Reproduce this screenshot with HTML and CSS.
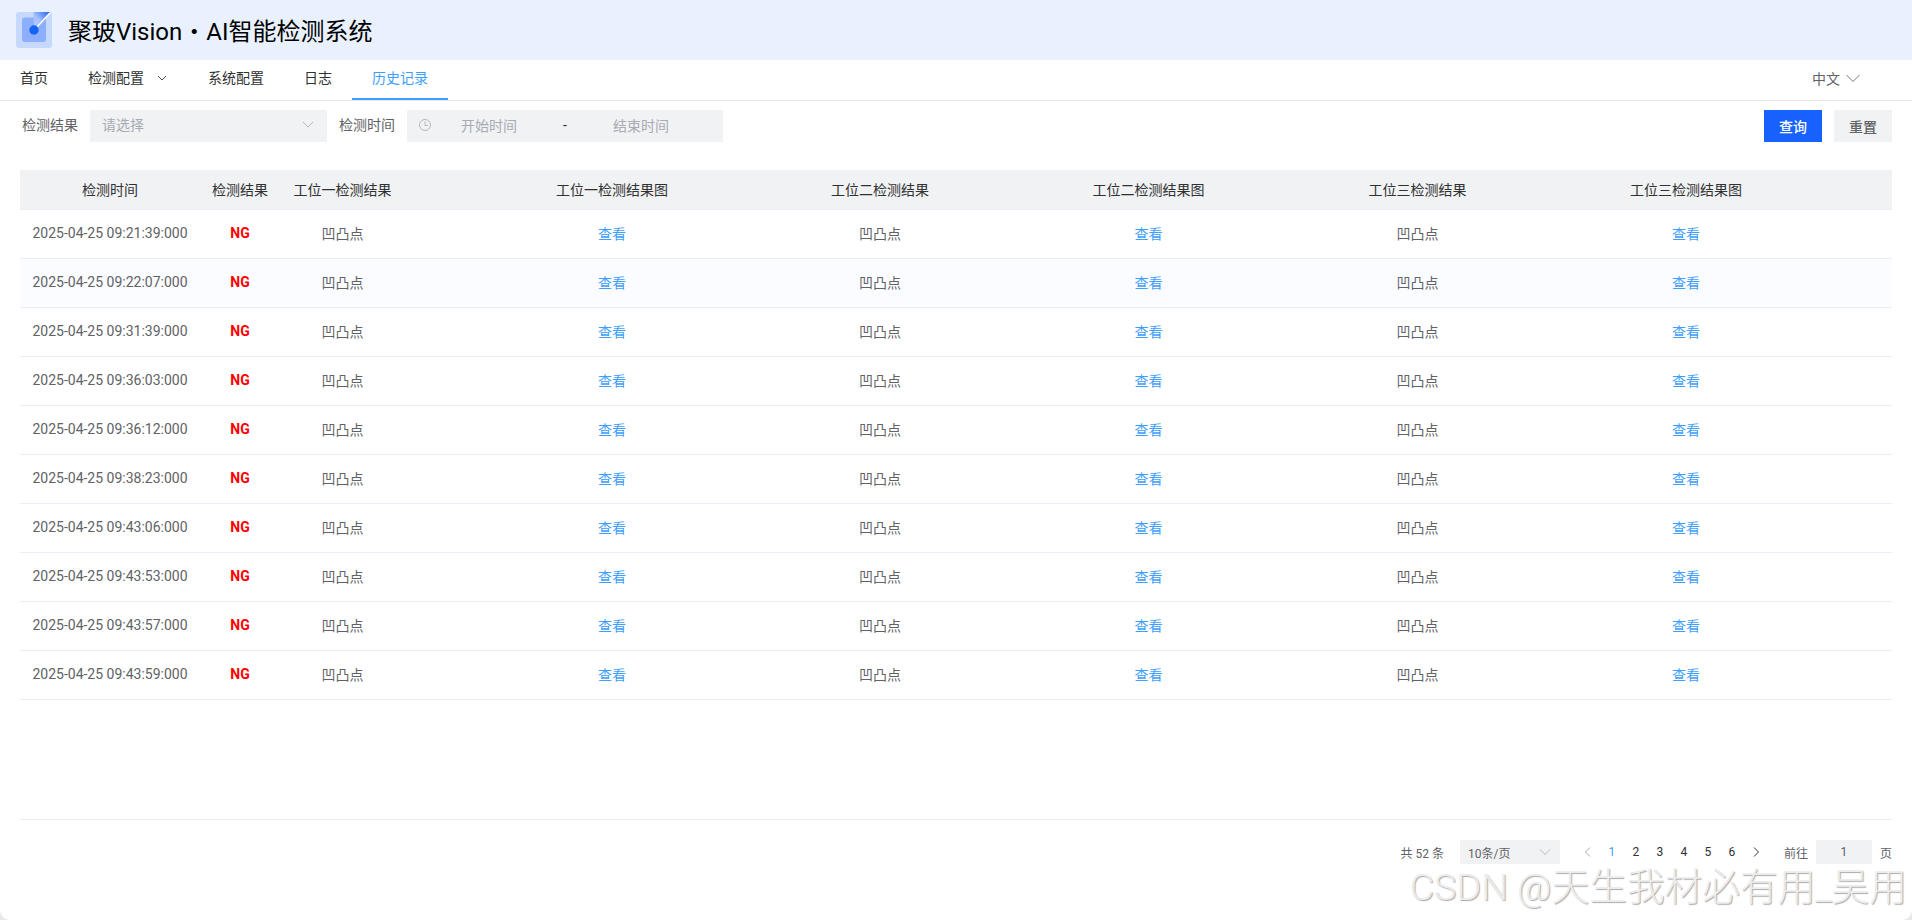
FILE: index.html
```html
<!DOCTYPE html>
<html lang="zh-CN">
<head>
<meta charset="utf-8">
<title>聚玻Vision・AI智能检测系统</title>
<link rel="stylesheet" href="styles.css">
</head>
<body>
<div class="app">
  <header class="topbar">
    <svg class="logo" width="36" height="36" viewBox="0 0 36 36">
      <defs>
        <linearGradient id="beam" x1="0" y1="1" x2="1" y2="0">
          <stop offset="0" stop-color="#b4ccfd"/>
          <stop offset="0.45" stop-color="#a4c0fd"/>
          <stop offset="1" stop-color="#1f62f5"/>
        </linearGradient>
      </defs>
      <rect x="0" y="0" width="36" height="36" rx="3" fill="#c6d9fd"/>
      <rect x="6" y="5.5" width="24" height="24.5" rx="3" fill="#8caffb"/>
      <path d="M17.5 0H34L18 17.5Z" fill="url(#beam)"/>
      <path d="M21 15L34 1" stroke="#fff" stroke-width="1.4"/>
      <circle cx="18" cy="18" r="4.7" fill="#1464f6"/>
    </svg>
    <h1 class="title">聚玻Vision・AI智能检测系统</h1>
  </header>

  <nav class="nav">
    <a class="nav-item">首页</a>
    <a class="nav-item">检测配置
      <svg class="chev" width="12" height="12" viewBox="0 0 12 12"><path d="M2 4l4 4 4-4" fill="none" stroke="#555" stroke-width="1"/></svg>
    </a>
    <a class="nav-item">系统配置</a>
    <a class="nav-item">日志</a>
    <a class="nav-item active">历史记录</a>
    <div class="lang">中文
      <svg width="14" height="14" viewBox="0 0 14 14"><path d="M0.5 4L7 10.5L13.5 4" fill="none" stroke="#777" stroke-width="1"/></svg>
    </div>
  </nav>

  <section class="filters">
    <label class="flabel">检测结果</label>
    <div class="select">
      <span class="ph">请选择</span>
      <svg width="14" height="14" viewBox="0 0 14 14"><path d="M2 5l5 5 5-5" fill="none" stroke="#b5b8bd" stroke-width="1"/></svg>
    </div>
    <label class="flabel time-label">检测时间</label>
    <div class="range">
      <svg class="clock" width="14" height="14" viewBox="0 0 14 14"><circle cx="7" cy="7" r="5.5" fill="none" stroke="#b5b8bd"/><path d="M7 3.5V7.5H10" fill="none" stroke="#b5b8bd"/></svg>
      <span class="ph range-text">开始时间</span>
      <span class="sep">-</span>
      <span class="ph range-text">结束时间</span>
    </div>
    <div class="actions">
      <button class="btn primary">查询</button>
      <button class="btn plain">重置</button>
    </div>
  </section>

  <main class="table-wrap">
    <table class="grid">
      <colgroup>
        <col class="c-time"><col class="c-res"><col class="c-a"><col class="c-b1"><col class="c-a2"><col class="c-b"><col class="c-a3"><col>
      </colgroup>
      <thead>
        <tr><th>检测时间</th><th>检测结果</th><th>工位一检测结果</th><th>工位一检测结果图</th><th>工位二检测结果</th><th>工位二检测结果图</th><th>工位三检测结果</th><th>工位三检测结果图</th></tr>
      </thead>
      <tbody>
        <tr><td>2025-04-25 09:21:39:000</td><td class="ng">NG</td><td>凹凸点</td><td class="link">查看</td><td>凹凸点</td><td class="link">查看</td><td>凹凸点</td><td class="link">查看</td></tr>
        <tr class="tint"><td>2025-04-25 09:22:07:000</td><td class="ng">NG</td><td>凹凸点</td><td class="link">查看</td><td>凹凸点</td><td class="link">查看</td><td>凹凸点</td><td class="link">查看</td></tr>
        <tr><td>2025-04-25 09:31:39:000</td><td class="ng">NG</td><td>凹凸点</td><td class="link">查看</td><td>凹凸点</td><td class="link">查看</td><td>凹凸点</td><td class="link">查看</td></tr>
        <tr><td>2025-04-25 09:36:03:000</td><td class="ng">NG</td><td>凹凸点</td><td class="link">查看</td><td>凹凸点</td><td class="link">查看</td><td>凹凸点</td><td class="link">查看</td></tr>
        <tr><td>2025-04-25 09:36:12:000</td><td class="ng">NG</td><td>凹凸点</td><td class="link">查看</td><td>凹凸点</td><td class="link">查看</td><td>凹凸点</td><td class="link">查看</td></tr>
        <tr><td>2025-04-25 09:38:23:000</td><td class="ng">NG</td><td>凹凸点</td><td class="link">查看</td><td>凹凸点</td><td class="link">查看</td><td>凹凸点</td><td class="link">查看</td></tr>
        <tr><td>2025-04-25 09:43:06:000</td><td class="ng">NG</td><td>凹凸点</td><td class="link">查看</td><td>凹凸点</td><td class="link">查看</td><td>凹凸点</td><td class="link">查看</td></tr>
        <tr><td>2025-04-25 09:43:53:000</td><td class="ng">NG</td><td>凹凸点</td><td class="link">查看</td><td>凹凸点</td><td class="link">查看</td><td>凹凸点</td><td class="link">查看</td></tr>
        <tr><td>2025-04-25 09:43:57:000</td><td class="ng">NG</td><td>凹凸点</td><td class="link">查看</td><td>凹凸点</td><td class="link">查看</td><td>凹凸点</td><td class="link">查看</td></tr>
        <tr><td>2025-04-25 09:43:59:000</td><td class="ng">NG</td><td>凹凸点</td><td class="link">查看</td><td>凹凸点</td><td class="link">查看</td><td>凹凸点</td><td class="link">查看</td></tr>
      </tbody>
    </table>
  </main>

  <footer class="pager">
    <span class="total">共 52 条</span>
    <div class="size">
      <span>10条/页</span>
      <svg width="12" height="12" viewBox="0 0 12 12"><path d="M1 3.5l5 5 5-5" fill="none" stroke="#b5b8bd" stroke-width="1"/></svg>
    </div>
    <div class="pages">
      <span class="page"><svg class="arrow" width="12" height="12" viewBox="0 0 12 12"><path d="M8 1.5L3.5 6 8 10.5" fill="none" stroke="#a8abb2" stroke-width="1"/></svg></span>
      <span class="page current">1</span><span class="page">2</span><span class="page">3</span><span class="page">4</span><span class="page">5</span><span class="page">6</span>
      <span class="page"><svg class="arrow" width="12" height="12" viewBox="0 0 12 12"><path d="M4 1.5L8.5 6 4 10.5" fill="none" stroke="#303133" stroke-width="1"/></svg></span>
    </div>
    <span class="goto">前往</span>
    <div class="jump">1</div>
    <span class="unit">页</span>
  </footer>

  <div class="watermark">CSDN @天生我材必有用_吴用</div>
</div>
</body>
</html>
```

FILE: styles.css
```css
* { box-sizing: border-box; }
html, body { margin: 0; height: 100%; background: #e8e8e8; }
body {
  font-family: Roboto, "Noto Sans CJK SC", "Liberation Sans", sans-serif;
  font-size: 14px;
  color: #606266;
  overflow: hidden;
}
.app {
  position: relative;
  height: 920px;
  display: flex;
  flex-direction: column;
  background: #fff;
  border-radius: 0 0 10px 10px;
  overflow: hidden;
}

.topbar {
  height: 60px;
  background: #e9f1fe;
  display: flex;
  align-items: center;
  padding-left: 16px;
  flex: none;
}
.logo { display: block; }
.title {
  margin: 0 0 2px 16px;
  font-size: 24px;
  font-weight: 400;
  color: #000;
  white-space: nowrap;
}

.nav {
  height: 41px;
  flex: none;
  display: flex;
  align-items: stretch;
  border-bottom: 1px solid #e4e7ed;
  background: #fff;
}
.nav-item {
  padding: 0 20px 5px;
  display: flex;
  align-items: center;
  color: #303133;
  border-bottom: 2px solid transparent;
  height: 40px;
  white-space: nowrap;
}
.chev { margin-left: 12px; margin-top: 2px; }
.nav-item.active { color: #409eff; border-bottom-color: #409eff; }
.lang {
  margin-left: auto;
  margin-right: 52px;
  padding-bottom: 5px;
  display: flex;
  align-items: center;
  gap: 6px;
  color: #606266;
}

.filters {
  height: 32px;
  margin-top: 9px;
  flex: none;
  display: flex;
  align-items: center;
  padding: 0 20px 0 22px;
}
.flabel { color: #606266; white-space: nowrap; padding-bottom: 5px; }
.select {
  width: 237px;
  height: 32px;
  margin-left: 12px;
  padding: 0 12px 4px;
  background: #f1f2f4;
  display: flex;
  align-items: center;
  justify-content: space-between;
}
.ph { color: #a8abb2; }
.time-label { margin-left: 12px; }
.range {
  width: 316px;
  height: 32px;
  margin-left: 12px;
  padding: 0 0 3px 11px;
  background: #f1f2f4;
  display: flex;
  align-items: center;
}
.clock { flex: none; }
.range-text { width: 56px; margin-left: 29px; white-space: nowrap; }
.sep { color: #303133; margin-left: 46px; width: 6px; }
.range-text:last-child { margin-left: 44px; }
.actions { margin-left: auto; display: flex; gap: 12px; }
.btn {
  width: 58px;
  height: 32px;
  border: 0;
  padding: 0 0 1px;
  font: inherit;
  font-weight: 500;
}
.primary { background: #1761ff; color: #fff; }
.plain { background: #f1f2f4; color: #606266; }

.table-wrap {
  margin: 28px 20px 0;
  height: 650px;
  flex: none;
  border-bottom: 1px solid #ebeef5;
}
.grid {
  width: 100%;
  table-layout: fixed;
  border-collapse: separate;
  border-spacing: 0;
}
.c-time { width: 180px; }
.c-res { width: 80px; }
.c-a { width: 125px; }
.c-b1 { width: 414px; }
.c-b { width: 415px; }
.c-a2 { width: 122px; }
.c-a3 { width: 123px; }
.grid th {
  height: 40px;
  background: #f1f2f4;
  color: #303133;
  font-weight: 400;
  text-align: center;
  padding: 0 0 2px;
  white-space: nowrap;
  border-bottom: 1px solid #ebeef5;
}
.grid td {
  height: 49px;
  text-align: center;
  padding: 0 0 2px;
  border-bottom: 1px solid #ebeef5;
  white-space: nowrap;
  color: #606266;
}
.grid td:last-child,
.grid th:last-child { padding-left: 1px; }
.grid .tint td { background: #fbfcff; }
.grid td.ng { color: #f00; font-weight: 700; }
.grid td.link { color: #409eff; }

.pager {
  margin-top: 20px;
  height: 24px;
  flex: none;
  padding-right: 20px;
  display: flex;
  align-items: center;
  justify-content: flex-end;
  font-size: 12px;
  color: #606266;
}
.total { white-space: nowrap; }
.size {
  width: 100px;
  height: 24px;
  margin-left: 16px;
  padding: 0 9px 0 8px;
  background: #f1f2f4;
  display: flex;
  align-items: center;
  justify-content: space-between;
}
.pages { margin-left: 16px; display: flex; align-items: center; }
.arrow { display: block; }
.page {
  width: 24px;
  display: flex;
  justify-content: center;
  color: #303133;
}
.page.current { color: #409eff; }
.goto { margin-left: 16px; }
.jump {
  width: 56px;
  height: 24px;
  margin-left: 8px;
  background: #f1f2f4;
  display: flex;
  align-items: center;
  justify-content: center;
}
.unit { margin-left: 8px; }

.watermark {
  position: absolute;
  right: 5px;
  bottom: 9px;
  font-family: Roboto, "Noto Sans CJK SC", sans-serif;
  font-size: 37.7px;
  line-height: 48px;
  font-weight: 300;
  color: #ececec;
  text-shadow: 1px 1px 1px #aaa;
  white-space: nowrap;
}
```
